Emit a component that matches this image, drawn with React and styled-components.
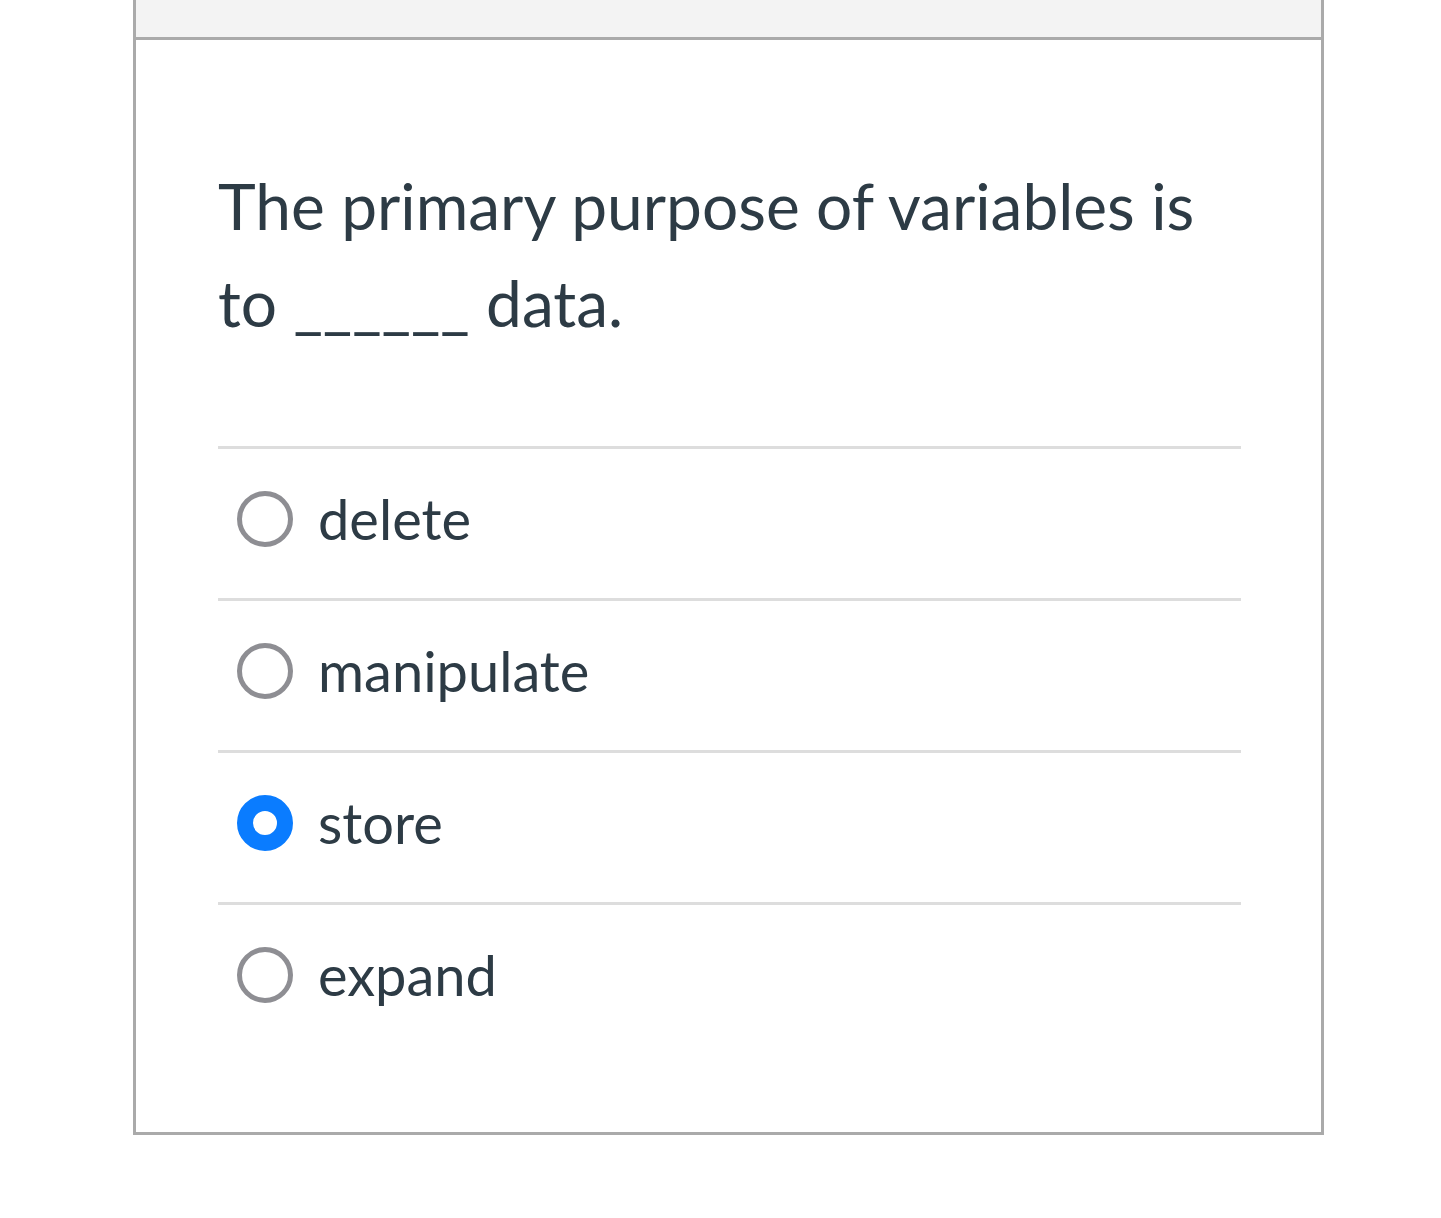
import styled, { createGlobalStyle } from "styled-components";

const GlobalStyle = createGlobalStyle`
    html, body {
        margin: 0;
        padding: 0;
        background: #ffffff;
    }
    body {
        font-family: Lato, "Noto Sans", sans-serif;
        color: #2d3b45;
    }
`;

const Page = styled.div`
    padding: 0 117px 0 133px;
`;

const Card = styled.section`
    width: 1191px;
    box-sizing: border-box;
    border: 3px solid #aaaaaa;
    border-top: none;
    background: #ffffff;
`;

const CardHeader = styled.header`
    height: 37px;
    background: #f3f3f3;
    border-bottom: 3px solid #aaaaaa;
`;

const CardBody = styled.div`
    padding: 117px 80px 78px 82px;
`;

const QuestionText = styled.p`
    margin: 0 0 95px 0;
    font-size: 64px;
    line-height: 97px;
    color: #2d3b45;
`;

const AnswerList = styled.div`
    display: flex;
    flex-direction: column;
`;

const AnswerRow = styled.label`
    display: flex;
    align-items: center;
    gap: 25px;
    height: 152px;
    box-sizing: border-box;
    border-top: 3px solid #dddddd;
    padding: 0 0 10px 19px;
    font-size: 56px;
    color: #2d3b45;
`;

const Radio = styled.span`
    width: 56px;
    height: 56px;
    box-sizing: border-box;
    border-radius: 50%;
    flex-shrink: 0;
    border: ${(p) => (p.checked ? "16px solid #0a7cff" : "5px solid #8e8e93")};
    background: #ffffff;
`;

const answers = [
    { text: "delete", checked: false },
    { text: "manipulate", checked: false },
    { text: "store", checked: true },
    { text: "expand", checked: false },
];

const App = () => {
    return (
        <Page>
            <GlobalStyle />
            <Card>
                <CardHeader />
                <CardBody>
                    <QuestionText>
                        The primary purpose of variables is to ______ data.
                    </QuestionText>
                    <AnswerList>
                        {answers.map((answer, index) => (
                            <AnswerRow key={index}>
                                <Radio checked={answer.checked} />
                                {answer.text}
                            </AnswerRow>
                        ))}
                    </AnswerList>
                </CardBody>
            </Card>
        </Page>
    );
};

export default App;
